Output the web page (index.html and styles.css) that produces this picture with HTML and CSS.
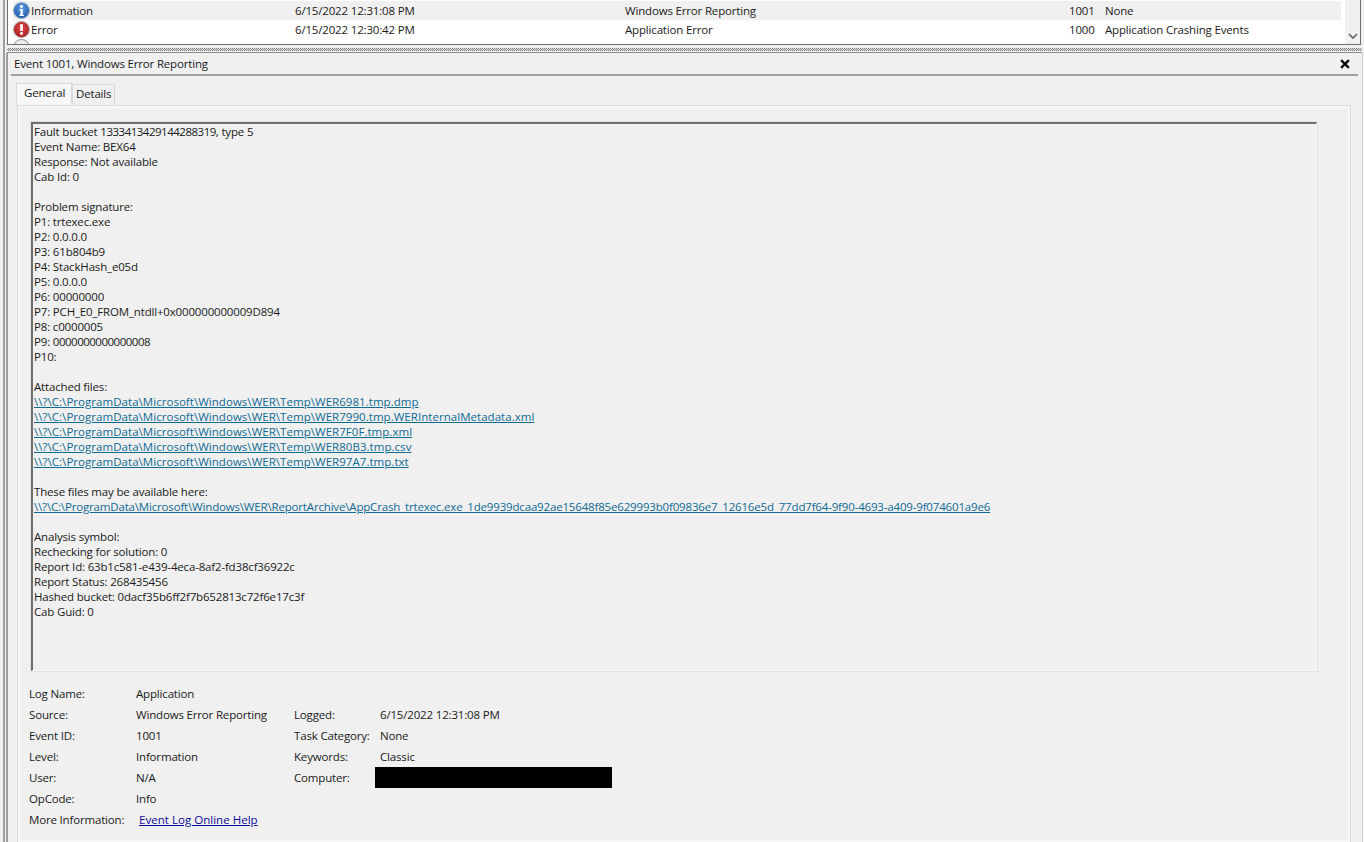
FILE: index.html
```html
<!DOCTYPE html>
<html lang="en">
<head>
<meta charset="utf-8">
<title>Event Viewer</title>
<link rel="stylesheet" href="styles.css">
</head>
<body>
<div class="app">
  <section class="list">
    <div class="rows">
      <div class="row row-sel">
        <svg class="ico" viewBox="0 0 16 16"><defs><radialGradient id="gi" cx="50%" cy="35%" r="65%"><stop offset="0" stop-color="#5fa2e6"/><stop offset="1" stop-color="#1d56a8"/></radialGradient></defs><circle cx="8" cy="8" r="7.5" fill="url(#gi)" stroke="#9fb0c6"/><circle cx="8" cy="4.2" r="1.4" fill="#fff"/><path d="M6.2 6.5h3v5.4h1v1.2h-4.2v-1.2h1v-4.2h-.8z" fill="#fff"/></svg>
        <span class="c-level">Information</span><span class="c-date">6/15/2022 12:31:08 PM</span><span class="c-src">Windows Error Reporting</span><span class="c-id">1001</span><span class="c-task">None</span>
      </div>
      <div class="row">
        <svg class="ico" viewBox="0 0 16 16"><defs><radialGradient id="ge" cx="50%" cy="40%" r="65%"><stop offset="0" stop-color="#e2474a"/><stop offset="1" stop-color="#a01a1e"/></radialGradient></defs><circle cx="8" cy="8" r="7.5" fill="url(#ge)" stroke="#b8a5a5"/><rect x="6.7" y="3" width="2.6" height="6.4" fill="#fff"/><circle cx="8" cy="11.8" r="1.4" fill="#fff"/></svg>
        <span class="c-level">Error</span><span class="c-date">6/15/2022 12:30:42 PM</span><span class="c-src">Application Error</span><span class="c-id">1000</span><span class="c-task">Application Crashing Events</span>
      </div>
      <div class="row-cut"><svg class="ico" viewBox="0 0 16 16"><circle cx="8" cy="8" r="7.5" fill="#eee" stroke="#999"/></svg></div>
    </div>
    <div class="scroll"><svg viewBox="0 0 10 7" class="chev"><path d="M1 1l4 4 4-4" fill="none" stroke="#606060" stroke-width="1.6"/></svg></div>
  </section>
  <div class="splitter"></div>
  <section class="pane">
    <header class="pane-head">
      <span>Event 1001, Windows Error Reporting</span>
      <svg class="close" viewBox="0 0 9 9"><path d="M1 1l7 7M8 1l-7 7" stroke="#000" stroke-width="2"/></svg>
    </header>
    <nav class="tabs">
      <span class="tab tab-on">General</span><span class="tab">Details</span>
    </nav>
    <div class="tabbody">
      <div class="desc">
        <p>Fault bucket <span class="digits">1333413429144288319</span>, type 5</p>
        <p>Event Name: BEX64</p>
        <p>Response: Not available</p>
        <p>Cab Id: 0</p>
        <p>&nbsp;</p>
        <p>Problem signature:</p>
        <p>P1: trtexec.exe</p>
        <p>P2: 0.0.0.0</p>
        <p>P3: 61b804b9</p>
        <p>P4: StackHash_e05d</p>
        <p>P5: 0.0.0.0</p>
        <p>P6: 00000000</p>
        <p>P7: PCH_E0_FROM_ntdll+0x000000000009D894</p>
        <p>P8: c0000005</p>
        <p>P9: <span class="digits">0000000000000008</span></p>
        <p>P10:</p>
        <p>&nbsp;</p>
        <p>Attached files:</p>
        <p><a class="path" href="#">\\?\C:\ProgramData\Microsoft\Windows\WER\Temp\WER6981.tmp.dmp</a></p>
        <p><a class="path" href="#">\\?\C:\ProgramData\Microsoft\Windows\WER\Temp\WER7990.tmp.WERInternalMetadata.xml</a></p>
        <p><a class="path" href="#">\\?\C:\ProgramData\Microsoft\Windows\WER\Temp\WER7F0F.tmp.xml</a></p>
        <p><a class="path" href="#">\\?\C:\ProgramData\Microsoft\Windows\WER\Temp\WER80B3.tmp.csv</a></p>
        <p><a class="path" href="#">\\?\C:\ProgramData\Microsoft\Windows\WER\Temp\WER97A7.tmp.txt</a></p>
        <p>&nbsp;</p>
        <p>These files may be available here:</p>
        <p><a href="#">\\?\C:\ProgramData\Microsoft\Windows\WER\ReportArchive\AppCrash_trtexec.exe_1de9939dcaa92ae15648f85e629993b0f09836e7_12616e5d_77dd7f64-9f90-4693-a409-9f074601a9e6</a></p>
        <p>&nbsp;</p>
        <p>Analysis symbol:</p>
        <p>Rechecking for solution: 0</p>
        <p>Report Id: 63b1c581-e439-4eca-8af2-fd38cf36922c</p>
        <p>Report Status: 268435456</p>
        <p>Hashed bucket: 0dacf35b6ff2f7b652813c72f6e17c3f</p>
        <p>Cab Guid: 0</p>
      </div>
      <div class="props">
        <span class="k">Log Name:</span><span class="v v-wide">Application</span>
        <span class="k">Source:</span><span class="v">Windows Error Reporting</span><span class="k2">Logged:</span><span class="v2">6/15/2022 12:31:08 PM</span>
        <span class="k">Event ID:</span><span class="v">1001</span><span class="k2">Task Category:</span><span class="v2">None</span>
        <span class="k">Level:</span><span class="v">Information</span><span class="k2">Keywords:</span><span class="v2">Classic</span>
        <span class="k">User:</span><span class="v">N/A</span><span class="k2">Computer:</span><span class="v2"><span class="redact"></span></span>
        <span class="k">OpCode:</span><span class="v v-wide">Info</span>
        <span class="k">More Information:</span><span class="v v-wide"><a class="help" href="#">Event Log Online Help</a></span>
      </div>
    </div>
  </section>
</div>
</body>
</html>
```
FILE: styles.css
```css
* { box-sizing: border-box; }
html, body { margin: 0; height: 100%; overflow: hidden; }
body {
  background: #f0f0f0;
  color: #1a1a1a;
  font: 11.5px/15px "Open Sans", "Noto Sans", sans-serif;
  letter-spacing: -0.17px;
}
p { margin: 0; white-space: nowrap; }
a { color: #0f6a94; }
.digits { letter-spacing: -0.5px; }
.path { letter-spacing: 0.04px; }
.app {
  height: 842px;
  display: flex;
  flex-direction: column;
  margin-left: 3px;
  padding-left: 1px;
  border-left: 2px solid #a0a0a0;
}
.list {
  height: 45px;
  display: flex;
  background: #fff;
  margin-left: 1px;
  margin-right: 3px;
  border: solid #6f6f6f;
  border-width: 0 1px 1px 1px;
  flex: none;
}
.rows { flex: 1; padding: 1px 4px 0 5px; overflow: hidden; }
.row { height: 19px; display: flex; align-items: center; line-height: 19px; }
.row-sel { background: #f0f0f0; }
.row-cut { height: 10px; overflow: hidden; }
.ico { width: 17px; height: 17px; flex: none; margin-right: 1px; }
.c-level { width: 264px; flex: none; }
.c-date { width: 330px; flex: none; }
.c-src { width: 444px; flex: none; }
.c-id { width: 36px; flex: none; }
.c-task { flex: 1; }
.scroll { width: 15px; background: #f0f0f0; flex: none; display: flex; align-items: flex-end; justify-content: center; padding-bottom: 4px; }
.chev { width: 10px; height: 7px; }
.splitter {
  height: 5px; flex: none; margin: 3px 2px 0 1px;
  background:
    linear-gradient(#f0f0f0, #f0f0f0) 0 3px / 100% 1px no-repeat,
    repeating-conic-gradient(#777 0 25%, #f0f0f0 0 50%) 0 0 / 2px 2px;
  border-bottom: 1px solid #8a8a8a;
}
.pane {
  flex: 1; margin-right: 1px;
  display: flex; flex-direction: column;
  border-left: 2px solid #a0a0a0;
  border-right: 1px solid #d0d0d0;
  min-height: 0;
}
.pane-head {
  height: 23px; flex: none;
  display: flex; align-items: center; justify-content: space-between;
  padding: 0 8px 0 3px;
  margin: 0 4px 0 3px;
  border-bottom: 2px solid #a0a0a0;
}
.close { width: 10px; height: 10px; }
.tabs { display: flex; align-items: flex-end; height: 29px; padding: 0 0 0 8px; flex: none; }
.tab {
  width: 43px; height: 21px; padding: 0 3px; line-height: 18px;
  border: 1px solid #d9d9d9; border-bottom: 0; background: #f0f0f0;
}
.tab-on { width: 56px; height: 22px; padding: 0 7px; line-height: 17px; background: #f7f7f7; }
.tabbody {
  flex: 1; margin-left: 9px; margin-right: 11px;
  border: solid #dcdcdc;
  border-width: 1px 1px 0 1px;
  box-shadow: inset 0 0 0 2px #f6f6f6;
  padding: 16px 0 0 13px;
  min-height: 0;
}
.desc {
  width: 1286px; height: 549px;
  padding: 0 0 0 1px;
  border-style: solid;
  border-color: #6f6f6f #f8f8f8 #f8f8f8 #6f6f6f;
  border-width: 2px 1px 1px 2px;
  outline: 1px solid #e0e0e0;
}
.props {
  margin-top: 12px;
  margin-left: -2px;
  display: grid;
  grid-template-columns: 107px 158px 86px 1fr;
  grid-auto-rows: 21px;
  line-height: 21px;
}
.v-wide { grid-column: 2 / 5; }
.help { color: #0a0a9a; margin-left: 3px; letter-spacing: 0.03px; }
.redact { display: block; width: 237px; height: 21px; background: #000; margin-left: -5px; }
```
